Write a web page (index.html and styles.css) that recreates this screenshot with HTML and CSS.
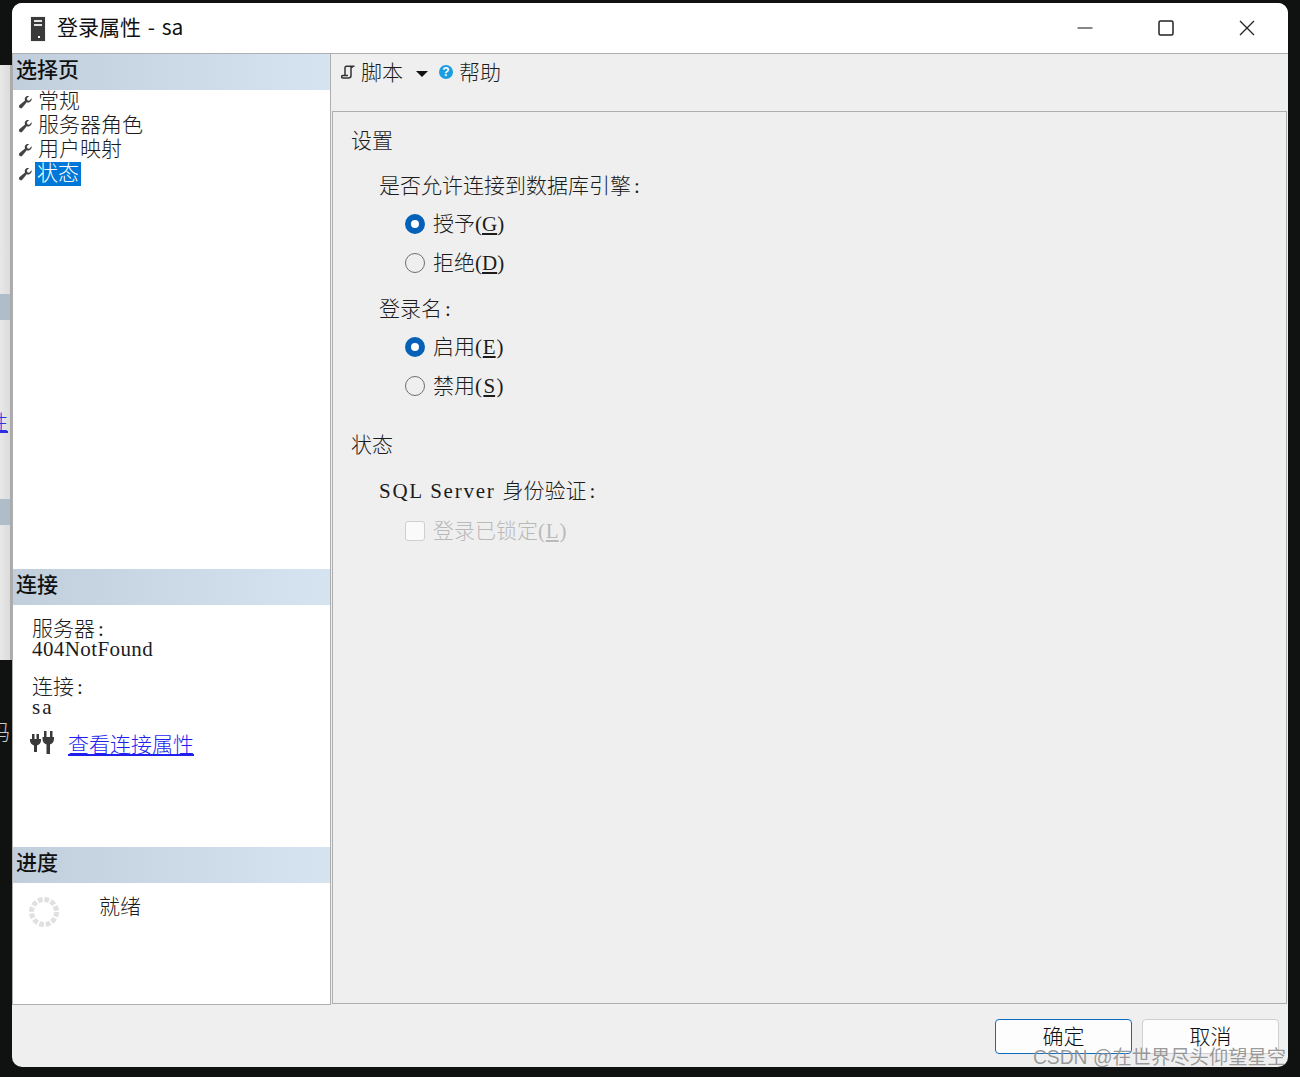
FILE: index.html
```html
<!DOCTYPE html>
<html lang="zh">
<head>
<meta charset="utf-8">
<title>登录属性 - sa</title>
<link rel="stylesheet" href="styles.css">
</head>
<body>
<div class="desk-strip">
  <div class="band band-a"></div>
  <div class="band band-b"></div>
  <span class="peek-link">性</span>
</div>
<span class="peek-dark">码</span>

<div class="window">
  <header class="titlebar">
    <svg class="app-icon" width="16" height="26" viewBox="0 0 16 26"><rect x="0" y="0" width="16" height="26" fill="#f2f2f2"/><rect x="1" y="1" width="14" height="24" fill="#3a3a3a"/><rect x="4" y="4" width="8" height="2" fill="#e4e4e4"/><rect x="4" y="8" width="8" height="2" fill="#e4e4e4"/><rect x="8" y="20" width="2" height="2" fill="#fff"/></svg>
    <span class="title">登录属性 - sa</span>
    <div class="win-controls">
      <svg width="16" height="16" viewBox="0 0 16 16"><path d="M0.500 8h15" stroke="#111" stroke-width="1.200" fill="none"/></svg>
      <svg width="16" height="16" viewBox="0 0 16 16"><rect x="1" y="1" width="14" height="14" rx="1.500" stroke="#222" stroke-width="1.500" fill="none"/></svg>
      <svg width="16" height="16" viewBox="0 0 16 16"><path d="M1 1l14 14M15 1L1 15" stroke="#222" stroke-width="1.300" fill="none"/></svg>
    </div>
  </header>

  <div class="body">
    <aside class="sidebar">
      <section class="side-sec sec-pages">
        <h2 class="side-head">选择页</h2>
        <ul class="page-list">
          <li class="page-item"><svg class="wrench" width="13" height="13" viewBox="0 0 14 14"><path d="M13.600 2.400L11 5 9 4.500 8.500 2.500 11 0C9-.5 6.800.6 6.300 2.600c-.2.800-.1 1.500.2 2.200L.6 9.800c-.8.800-.8 2 0 2.800s2 .8 2.800 0l5-5.800c.8.300 1.600.3 2.400.1 2-.6 3.400-2.600 2.800-4.500z" fill="#444"/></svg><span class="page-text">常规</span></li>
          <li class="page-item"><svg class="wrench" width="13" height="13" viewBox="0 0 14 14"><path d="M13.600 2.400L11 5 9 4.500 8.500 2.500 11 0C9-.5 6.800.6 6.300 2.600c-.2.800-.1 1.500.2 2.200L.6 9.800c-.8.800-.8 2 0 2.800s2 .8 2.800 0l5-5.800c.8.300 1.600.3 2.400.1 2-.6 3.400-2.600 2.800-4.500z" fill="#444"/></svg><span class="page-text">服务器角色</span></li>
          <li class="page-item"><svg class="wrench" width="13" height="13" viewBox="0 0 14 14"><path d="M13.600 2.400L11 5 9 4.500 8.500 2.500 11 0C9-.5 6.800.6 6.300 2.600c-.2.800-.1 1.500.2 2.200L.6 9.800c-.8.800-.8 2 0 2.800s2 .8 2.800 0l5-5.800c.8.300 1.600.3 2.400.1 2-.6 3.400-2.600 2.800-4.500z" fill="#444"/></svg><span class="page-text">用户映射</span></li>
          <li class="page-item"><svg class="wrench" width="13" height="13" viewBox="0 0 14 14"><path d="M13.600 2.400L11 5 9 4.500 8.500 2.500 11 0C9-.5 6.800.6 6.300 2.600c-.2.800-.1 1.500.2 2.200L.6 9.800c-.8.800-.8 2 0 2.800s2 .8 2.800 0l5-5.800c.8.300 1.600.3 2.400.1 2-.6 3.400-2.600 2.800-4.500z" fill="#444"/></svg><span class="page-text selected">状态</span></li>
        </ul>
      </section>

      <section class="side-sec sec-conn">
        <h2 class="side-head">连接</h2>
        <div class="conn-body">
          <div class="conn-line">服务器<span class="colon">:</span></div>
          <div class="conn-line conn-val"><span class="lat-id">404NotFound</span></div>
          <div class="conn-line conn-gap">连接<span class="colon">:</span></div>
          <div class="conn-line conn-val"><span class="lat-sa">sa</span></div>
          <div class="conn-link-row">
            <svg width="26" height="24" viewBox="0 0 26 24"><g fill="#3a3a3a"><rect x="3" y="3" width="2.500" height="5"/><rect x="7.500" y="3" width="2.500" height="5"/><path d="M1 8h11v1.500c0 2.500-2 4.500-4 5V21H5v-6.500C3 14 1 12 1 9.500z"/><rect x="15" y="0" width="2.500" height="6"/><rect x="21" y="0" width="2.500" height="6"/><path d="M13.500 6h11.500v2c0 3-2 5-4 5.500V23h-3.500v-9.500c-2-.5-4-2.500-4-5.500z"/></g></svg>
            <a class="conn-link" href="#">查看连接属性</a>
          </div>
        </div>
      </section>

      <section class="side-sec sec-progress">
        <h2 class="side-head">进度</h2>
        <div class="progress-body">
          <svg width="30" height="30" viewBox="0 0 30 30"><circle cx="15" cy="15" r="12.500" fill="none" stroke="#e0e0e0" stroke-width="5" stroke-dasharray="4.700 1.845"/></svg>
          <span class="progress-text">就绪</span>
        </div>
      </section>
    </aside>

    <main class="content">
      <div class="toolbar">
        <svg width="14" height="15" viewBox="0 0 14 15"><path d="M4 10V2.800C4 1.800 4.600 1.200 5.500 1.200H13.500M11 1.500V3M10 1.500V10.500c0 1.500-1 2.500-2.500 2.500H2c-1 0-1.500-.7-1.500-1.300S1 10.500 2 10.500h5" fill="none" stroke="#333" stroke-width="1.500"/></svg>
        <span class="tool-text">脚本</span>
        <svg class="caret" width="12" height="6" viewBox="0 0 12 6"><path d="M0 0h12L6 6z" fill="#111"/></svg>
        <svg class="help" width="14" height="14" viewBox="0 0 14 14"><circle cx="7" cy="7" r="7" fill="#1b9ee0"/><text x="7" y="11.200" text-anchor="middle" class="help-q">?</text></svg>
        <span class="tool-text">帮助</span>
      </div>

      <div class="panel">
        <div class="line">设置</div>
        <div class="line level-1 gap-15">是否允许连接到数据库引擎<span class="colon">:</span></div>
        <div class="options">
          <div class="option"><span class="radio on"></span><span class="opt-text">授予(<u>G</u>)</span></div>
          <div class="option"><span class="radio"></span><span class="opt-text">拒绝(<u>D</u>)</span></div>
        </div>
        <div class="line level-1 gap-12">登录名<span class="colon">:</span></div>
        <div class="options">
          <div class="option"><span class="radio on"></span><span class="opt-text">启用(<u>E</u>)</span></div>
          <div class="option"><span class="radio"></span><span class="opt-text">禁用(<u>S</u>)</span></div>
        </div>
        <div class="line gap-25">状态</div>
        <div class="line level-1 gap-16"><span class="lat-sql">SQL Server </span>身份验证<span class="colon">:</span></div>
        <div class="option disabled check-row"><span class="check"></span><span class="opt-text">登录已锁定(<u>L</u>)</span></div>
      </div>
    </main>
  </div>

  <footer class="footer">
    <button class="btn primary" type="button">确定</button>
    <button class="btn" type="button">取消</button>
  </footer>
  <span class="watermark">CSDN @在世界尽头仰望星空</span>
</div>
</body>
</html>
```
FILE: styles.css
```css
* { box-sizing: border-box; }
html, body { margin: 0; height: 100%; }
body {
  position: relative;
  width: 1300px;
  height: 1077px;
  overflow: hidden;
  background: #101212;
  font-family: "Liberation Serif", "Noto Sans CJK SC", serif;
  font-size: 21px;
  font-weight: 300;
  color: #1c1c1c;
}
.desk-strip {
  position: absolute;
  left: 0;
  top: 65px;
  width: 12px;
  height: 595px;
  background: linear-gradient(90deg, #e8e8e8, #dcdcdc 80%, #ababab 84%);
}
.band { position: absolute; left: 0; width: 10px; height: 26px; background: #afbcca; }
.band-a { top: 229px; }
.band-b { top: 434px; }
.peek-link {
  position: absolute;
  left: -12px;
  top: 346px;
  font-size: 20px;
  line-height: 24px;
  color: #3030e0;
  text-decoration: underline;
  width: 21px;
  height: 26px;
  clip-path: inset(0 0 0 12px);
  display: block;
}
.peek-dark {
  position: absolute;
  left: -12px;
  top: 720px;
  width: 24px;
  font-size: 22px;
  line-height: 26px;
  color: #c9c9c9;
}
.window {
  position: absolute;
  left: 12px;
  top: 3px;
  width: 1276px;
  height: 1064px;
  border-radius: 10px;
  background: #efefef;
  display: flex;
  flex-direction: column;
  overflow: hidden;
}
.titlebar {
  height: 50px;
  flex: none;
  background: #fff;
  display: flex;
  align-items: center;
  padding-left: 18px;
}
.app-icon { flex: none; margin-top: 1px; }
.title {
  margin: 0 0 4px 11px;
  font-family: "Noto Sans CJK SC", sans-serif;
  font-size: 21px;
  font-weight: 400;
  word-spacing: 2px;
  color: #111;
}
.win-controls {
  margin-left: auto;
  display: flex;
  gap: 65px;
  padding-right: 33px;
  margin-bottom: 1px;
}
.body { flex: none; height: 952px; display: flex; }
.sidebar {
  width: 319px;
  flex: none;
  background: #fff;
  border: 1px solid #aeaeae;
  display: flex;
  flex-direction: column;
}
.side-sec { display: flex; flex-direction: column; flex: none; }
.sec-pages { height: 515px; }
.sec-conn { height: 278px; }
.sec-progress { flex: 1; }
.side-head {
  margin: 0;
  height: 36px;
  flex: none;
  padding-left: 3px;
  font-family: "Noto Sans CJK SC", sans-serif;
  font-size: 21px;
  font-weight: 500;
  line-height: 29px;
  color: #111;
  background: linear-gradient(90deg, #c1cedc, #d6e3f1);
}
.page-list { list-style: none; margin: 0; padding: 0; }
.page-item { height: 24px; display: flex; align-items: center; padding-left: 6px; }
.wrench { flex: none; }
.page-text { margin-left: 3px; padding: 0 2px; height: 24px; line-height: 22px; }
.page-item .page-text:not(.selected) { margin-left: 4px; }
.page-text.selected { background: #0078d7; color: #fff; }
.conn-body { padding: 12px 0 0 19px; }
.conn-line { height: 23px; line-height: 24px; }
.conn-val { line-height: 19px; }
.colon { margin-left: 3px; }
.lat-id { letter-spacing: 0.4px; }
.lat-sa { letter-spacing: 2px; }
.lat-sql { letter-spacing: 1.750px; white-space: pre; }
.conn-gap { margin-top: 12px; }
.conn-link-row { display: flex; align-items: center; gap: 13px; margin: 7px 0 0 -3px; height: 30px; }
.conn-link { color: #1f1ff0; }
.progress-body { display: flex; align-items: flex-start; padding: 14px 0 0 16px; }
.progress-text { margin-left: 40px; line-height: 20px; }

.content { flex: 1; min-width: 0; display: flex; flex-direction: column; padding-left: 1px; }
.toolbar {
  height: 58px;
  flex: none;
  display: flex;
  align-items: flex-start;
  padding: 8px 0 0 10px;
  border-top: 1px solid #aeaeae;
  margin-left: -1px;
}
.toolbar > svg { margin-top: 3px; flex: none; }
.tool-text { line-height: 22px; margin-left: 6px; }
.toolbar > .caret { margin: 9px 0 0 13px; }
.toolbar > .help { margin: 3px 0 0 11px; }
.help .help-q { font-family: "Liberation Sans", sans-serif; font-size: 12px; font-weight: 700; fill: #fff; }
.panel {
  flex: none;
  height: 893px;
  width: 955px;
  border: 1px solid #aeaeae;
  padding: 14px 0 0 18px;
}
.line { height: 30px; line-height: 30px; }
.line.level-1 { margin-left: 28px; }
.gap-15 { margin-top: 15px; }
.gap-12 { margin-top: 12px; }
.gap-25 { margin-top: 25px; }
.gap-16 { margin-top: 16px; }
.options { margin-top: 3px; }
.option {
  height: 39px;
  display: flex;
  align-items: center;
  gap: 8px;
  margin-left: 54px;
}
.opt-text { line-height: 30px; }
.option u { display: inline-block; min-width: 14.500px; text-align: center; text-underline-offset: 2px; }
.radio {
  width: 20px; height: 20px;
  flex: none;
  border-radius: 50%;
  border: 1px solid #6e6e6e;
  background: #efefef;
}
.radio.on { border: 6px solid #0561b7; background: #fff; }
.check-row { margin-top: 5px; height: 40px; color: #b9b9b9; }
.check { width: 20px; height: 20px; flex: none; border: 1px solid #cfcfcf; border-radius: 3px; background: #fafafa; }
.footer {
  flex: 1;
  display: flex;
  justify-content: flex-end;
  align-items: flex-start;
  gap: 10px;
  padding: 14px 9px 0 0;
}
.btn {
  width: 137px;
  height: 35px;
  padding: 0 0 4px;
  font-family: inherit;
  font-size: 21px;
  font-weight: 300;
  color: #111;
  background: #fdfdfd;
  border: 1px solid #d0d0d0;
  border-radius: 4px;
}
.btn.primary { border: 1.500px solid #0f6cbd; }
.watermark {
  position: absolute;
  right: 2px;
  bottom: -2px;
  font-family: "Liberation Sans", "Noto Sans CJK SC", sans-serif;
  font-size: 19.300px;
  font-weight: 400;
  line-height: 22px;
  color: rgba(110, 110, 110, 0.7);
  text-shadow: 0 0 1px rgba(255,255,255,.6);
}
```
